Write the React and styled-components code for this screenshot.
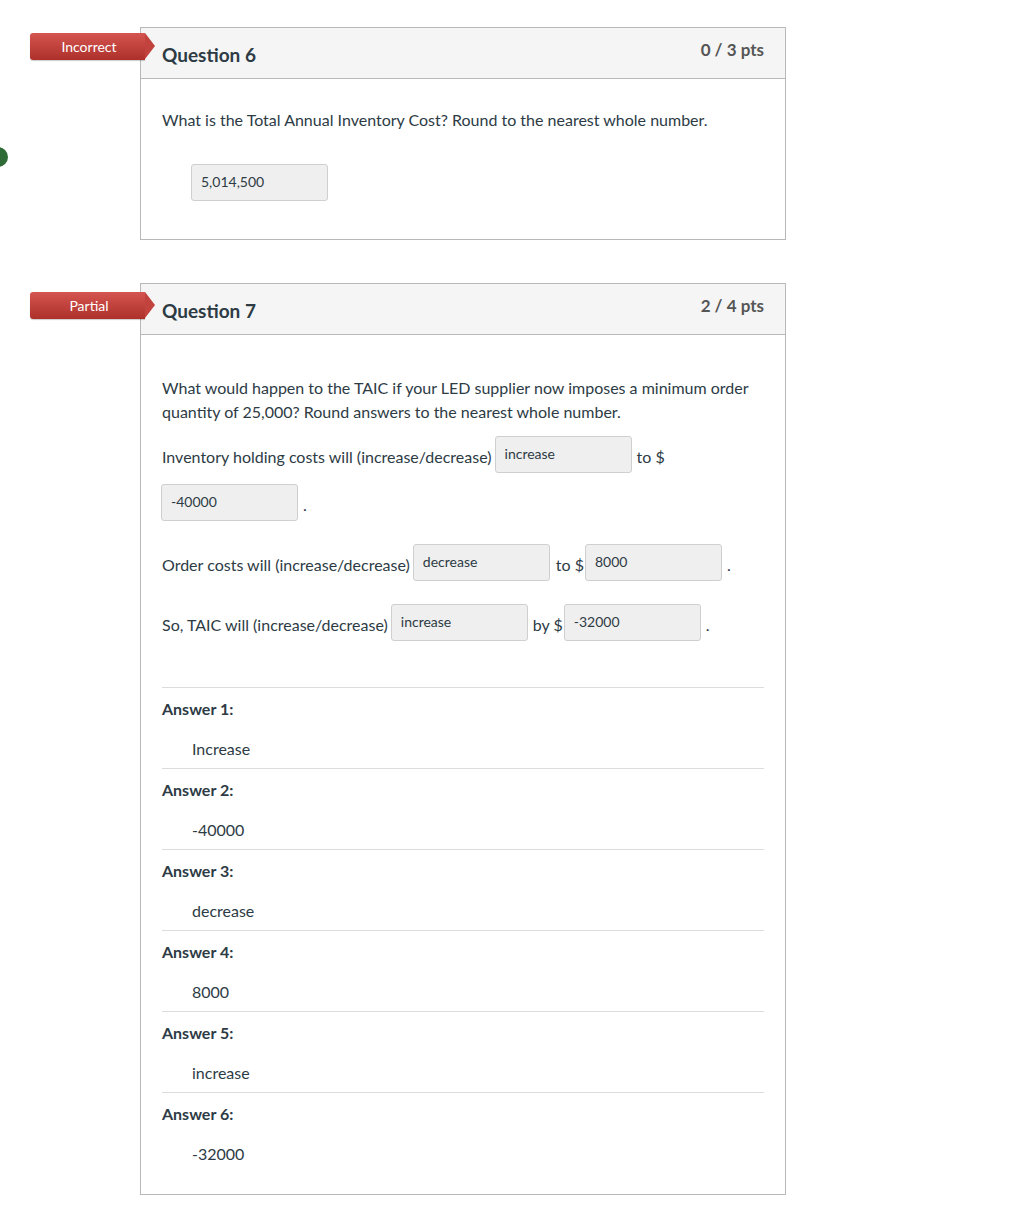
import styled, { createGlobalStyle } from "styled-components";

const GlobalStyle = createGlobalStyle`
    body {
        margin: 0;
        background: #fff;
        font-family: Lato, "Open Sans", "Liberation Sans", sans-serif;
        color: #2d3b45;
    }
`;

const Page = styled.div`
    position: relative;
    width: 1016px;
    min-height: 1218px;
    padding-top: 27px;
    box-sizing: border-box;
`;

const SideDot = styled.div`
    position: absolute;
    left: -12px;
    top: 147px;
    width: 20px;
    height: 20px;
    border-radius: 50%;
    background: #2f6b36;
`;

const QuestionRow = styled.div`
    display: flex;
    margin-bottom: ${(props) => props.mb || "0"};
`;

const BadgeCol = styled.div`
    width: 140px;
    padding-top: ${(props) => props.offset || "6px"};
    padding-left: 30px;
    box-sizing: border-box;
`;

const Badge = styled.div`
    position: relative;
    width: 115px;
    height: 27px;
    line-height: 27px;
    padding-left: 3px;
    box-sizing: border-box;
    text-align: center;
    color: #fff;
    font-size: 14px;
    border-radius: 3px 0 0 3px;
    background: linear-gradient(#d55550, #ad302b);
    box-shadow: 0 1px 1px rgba(0, 0, 0, 0.2);
    &::after {
        content: "";
        position: absolute;
        right: -10px;
        top: 0;
        border-top: 13.5px solid transparent;
        border-bottom: 13.5px solid transparent;
        border-left: 10px solid #c2423d;
    }
`;

const Box = styled.div`
    width: 646px;
    border: 1px solid #b8b8b8;
    box-sizing: border-box;
`;

const Header = styled.div`
    display: flex;
    justify-content: space-between;
    height: 51px;
    padding: 0 21px;
    background: #f5f5f5;
    border-bottom: 1px solid #b8b8b8;
    box-sizing: border-box;
`;

const Title = styled.div`
    font-size: 19px;
    font-weight: 700;
    padding-top: 15px;
`;

const Points = styled.div`
    font-size: 17px;
    font-weight: 700;
    color: #555;
    padding-top: 11px;
`;

const Body = styled.div`
    padding: ${(props) => props.pad || "29px 21px 38px"};
    font-size: 16px;
    line-height: 24px;
`;

const Text = styled.p`
    margin: 0 0 ${(props) => props.mb || "0"};
`;

const Line = styled.div`
    display: flex;
    align-items: center;
    height: 37px;
    margin-top: ${(props) => props.mt || "0"};
    margin-left: ${(props) => props.ml || "0"};
`;

const Words = styled.span`
    padding-top: 4px;
    white-space: nowrap;
`;

const Input = styled.div`
    width: 137px;
    height: 37px;
    flex-shrink: 0;
    box-sizing: border-box;
    margin: ${(props) => props.m || "0 4px"};
    padding: 0 9px 1px;
    display: flex;
    align-items: center;
    background: #efefef;
    border: 1px solid #cfcfcf;
    border-radius: 3px;
    font-size: 14px;
    color: #2d3b45;
`;

const Dot = styled.span`
    margin-left: 5px;
    padding-top: 4px;
`;

const Answers = styled.div`
    margin-top: 46px;
`;

const AnswerBlock = styled.div`
    border-top: 1px solid #dcdcdc;
    padding: 9px 0 ${(props) => (props.last ? "28px" : "7px")};
`;

const AnswerLabel = styled.div`
    font-weight: 700;
`;

const AnswerValue = styled.div`
    margin: 16px 0 0 30px;
`;

const answers = ["Increase", "-40000", "decrease", "8000", "increase", "-32000"];

export default function App() {
    return (
        <Page>
            <GlobalStyle />
            <SideDot />
            <QuestionRow mb="43px">
                <BadgeCol offset="6px">
                    <Badge>Incorrect</Badge>
                </BadgeCol>
                <Box>
                    <Header>
                        <Title>Question 6</Title>
                        <Points>0 / 3 pts</Points>
                    </Header>
                    <Body>
                        <Text mb="32px">
                            What is the Total Annual Inventory Cost? Round to the nearest whole number.
                        </Text>
                        <Line ml="29px">
                            <Input m="0">5,014,500</Input>
                        </Line>
                    </Body>
                </Box>
            </QuestionRow>

            <QuestionRow>
                <BadgeCol offset="9px">
                    <Badge>Partial</Badge>
                </BadgeCol>
                <Box>
                    <Header>
                        <Title>Question 7</Title>
                        <Points>2 / 4 pts</Points>
                    </Header>
                    <Body pad="41px 21px 0">
                        <Text>
                            What would happen to the TAIC if your LED supplier now imposes a minimum order
                            quantity of 25,000? Round answers to the nearest whole number.
                        </Text>
                        <Line mt="12px">
                            <Words>Inventory holding costs will (increase/decrease)</Words>
                            <Input m="0 5px 0 3px">increase</Input>
                            <Words>to $</Words>
                        </Line>
                        <Line mt="11px" ml="-1px">
                            <Input m="0">-40000</Input>
                            <Dot>.</Dot>
                        </Line>
                        <Line mt="23px">
                            <Words>Order costs will (increase/decrease)</Words>
                            <Input m="0 6px 0 3px">decrease</Input>
                            <Words>to $</Words>
                            <Input m="0 0 0 1px">8000</Input>
                            <Dot>.</Dot>
                        </Line>
                        <Line mt="23px">
                            <Words>So, TAIC will (increase/decrease)</Words>
                            <Input m="0 5px 0 3px">increase</Input>
                            <Words>by $</Words>
                            <Input m="0 0 0 1px">-32000</Input>
                            <Dot>.</Dot>
                        </Line>
                        <Answers>
                            {answers.map((value, index) => (
                                <AnswerBlock key={index} last={index === answers.length - 1}>
                                    <AnswerLabel>Answer {index + 1}:</AnswerLabel>
                                    <AnswerValue>{value}</AnswerValue>
                                </AnswerBlock>
                            ))}
                        </Answers>
                    </Body>
                </Box>
            </QuestionRow>
        </Page>
    );
}
